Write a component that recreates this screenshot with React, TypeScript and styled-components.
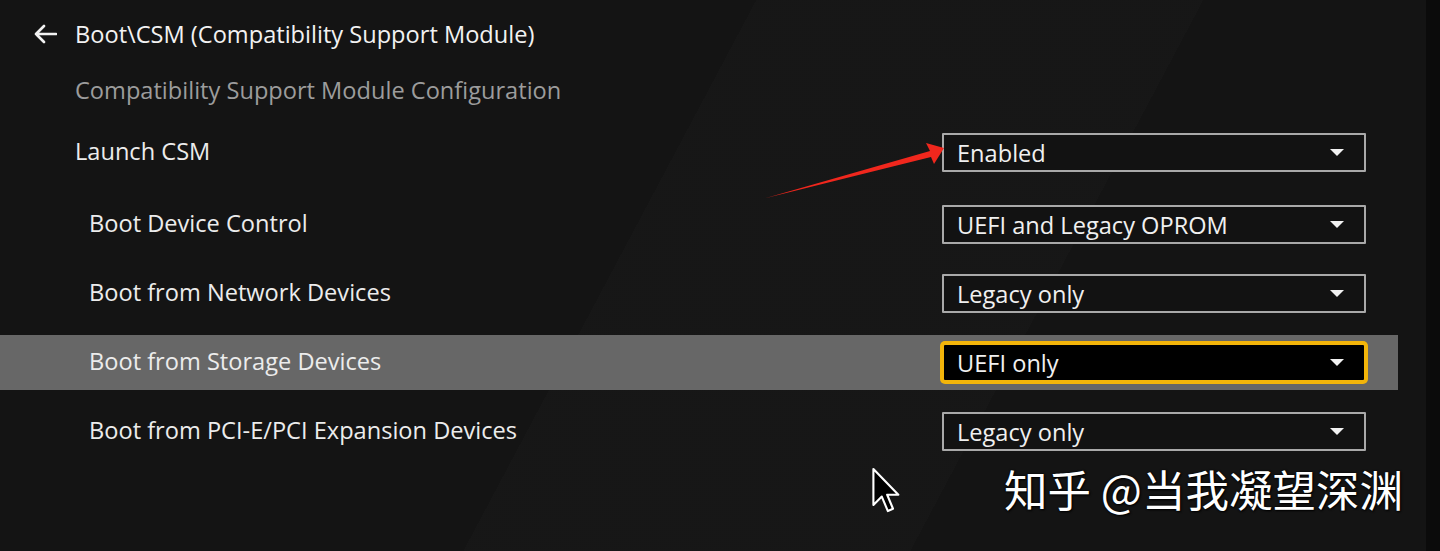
import styled, { createGlobalStyle } from 'styled-components';

const GlobalStyle = createGlobalStyle`
  html, body {
    margin: 0;
    padding: 0;
    background: #141414;
  }
  * {
    box-sizing: border-box;
  }
`;

const Screen = styled.div`
  position: relative;
  display: flex;
  width: 1440px;
  height: 551px;
  overflow: hidden;
  background: #141414;
  font-family: 'Open Sans', 'Noto Sans', sans-serif;
`;

const Main = styled.div`
  flex: 1;
  display: flex;
  flex-direction: column;
  background:
    linear-gradient(118deg, transparent 0 44%, rgba(255, 255, 255, 0.012) 44% 70%, transparent 70%),
    #141414;
`;

const SideStrip = styled.div`
  width: 14px;
  background: #0b0b0b;
`;

const Header = styled.div`
  display: flex;
  align-items: center;
  gap: 18px;
  height: 30px;
  margin-top: 19px;
  padding-left: 33px;
`;

const Title = styled.h1`
  margin: 0;
  font-size: 23.6px;
  font-weight: 400;
  color: #f2f2f2;
`;

const Subtitle = styled.div`
  margin-top: 26px;
  padding-left: 75px;
  height: 30px;
  line-height: 30px;
  font-size: 23.6px;
  color: #9c9c9c;
`;

const List = styled.div`
  display: flex;
  flex-direction: column;
  gap: 14px;
  margin-top: 20px;
`;

const Row = styled.div<{ $indent?: boolean; $highlight?: boolean; $extra?: number }>`
  display: flex;
  align-items: center;
  width: 1398px;
  height: 55px;
  margin-bottom: ${p => p.$extra ?? 0}px;
  padding-left: ${p => (p.$indent ? 89 : 75)}px;
  padding-right: 32px;
  background: ${p => (p.$highlight ? '#676767' : 'transparent')};
`;

const Label = styled.div`
  flex: 1;
  font-size: 23.6px;
  color: #ececec;
  transform: translateY(-2px);
`;

const Select = styled.div<{ $focused?: boolean }>`
  display: flex;
  align-items: center;
  justify-content: space-between;
  width: 424px;
  height: 39px;
  padding: 0 20px 0 13px;
  border: 2px solid ${p => (p.$focused ? '#f3b50a' : '#a9a9a9')};
  border-radius: ${p => (p.$focused ? '3px' : '1px')};
  box-shadow: ${p => (p.$focused ? '0 0 0 2px #f3b50a' : 'none')};
  background: ${p => (p.$focused ? '#000' : '#121212')};
  font-size: 23.6px;
  color: #f0f0f0;
`;

const Caret = styled.span`
  width: 0;
  height: 0;
  border-left: 7px solid transparent;
  border-right: 7px solid transparent;
  border-top: 7px solid #f2f2f2;
`;

const Overlay = styled.svg`
  position: absolute;
  left: 0;
  top: 0;
  pointer-events: none;
`;

const Cursor = styled.svg`
  position: absolute;
  left: 872px;
  top: 467px;
`;

const Watermark = styled.div`
  position: absolute;
  left: 1004px;
  top: 457px;
  font-family: 'Noto Sans CJK SC', 'Noto Sans', sans-serif;
  font-size: 43.5px;
  color: #fff;
  text-shadow: 0 0 2px #000, 1px 1px 2px #000;
`;

const BackArrow = () => (
  <svg width="24" height="20" viewBox="0 0 24 20" fill="none">
    <path d="M23 10H3M11 2L3 10l8 8" stroke="#f2f2f2" strokeWidth="2.6" strokeLinecap="round" strokeLinejoin="round" />
  </svg>
);

interface Setting {
  label: string;
  value: string;
  indent?: boolean;
  focused?: boolean;
  extra?: number;
}

const settings: Setting[] = [
  { label: 'Launch CSM', value: 'Enabled', extra: 3 },
  { label: 'Boot Device Control', value: 'UEFI and Legacy OPROM', indent: true },
  { label: 'Boot from Network Devices', value: 'Legacy only', indent: true },
  { label: 'Boot from Storage Devices', value: 'UEFI only', indent: true, focused: true },
  { label: 'Boot from PCI-E/PCI Expansion Devices', value: 'Legacy only', indent: true },
];

export default function App() {
  return (
    <>
      <GlobalStyle />
      <Screen>
        <Main>
          <Header>
            <BackArrow />
            <Title>Boot\CSM (Compatibility Support Module)</Title>
          </Header>
          <Subtitle>Compatibility Support Module Configuration</Subtitle>
          <List>
            {settings.map(s => (
              <Row key={s.label} $indent={s.indent} $highlight={s.focused} $extra={s.extra}>
                <Label>{s.label}</Label>
                <Select $focused={s.focused}>
                  <span>{s.value}</span>
                  <Caret />
                </Select>
              </Row>
            ))}
          </List>
        </Main>
        <SideStrip />

        <Overlay width="1440" height="551" viewBox="0 0 1440 551">
          <polygon
            points="766,198 930,151 926,143 944,148 934,164 931,157"
            fill="#f0271d"
          />
        </Overlay>

        <Cursor width="28" height="48" viewBox="0 0 12 20">
          <path
            d="M0.6 0.6 L0.6 16 L4.2 12.4 L6.8 18.6 L9 17.6 L6.5 11.6 L11.3 11.6 Z"
            fill="#000"
            stroke="#fff"
            strokeWidth="0.9"
            strokeLinejoin="round"
          />
        </Cursor>

        <Watermark>知乎 @当我凝望深渊</Watermark>
      </Screen>
    </>
  );
}
